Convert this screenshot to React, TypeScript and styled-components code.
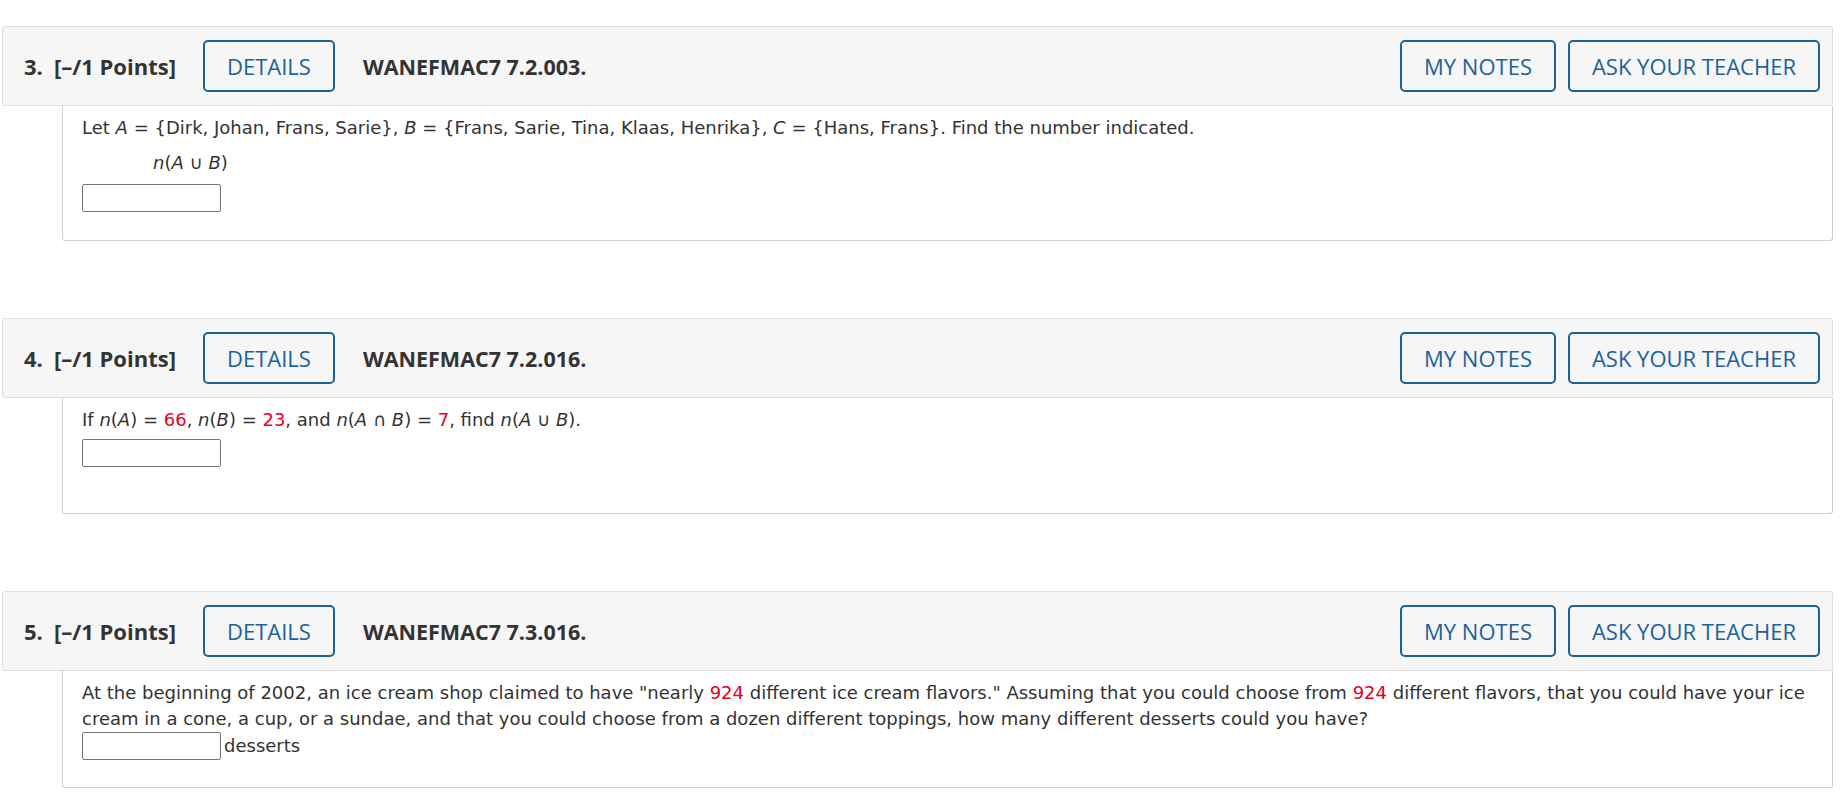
import React, { FunctionComponent, ReactNode } from "react"
import styled, { createGlobalStyle } from "styled-components"

const GlobalStyle = createGlobalStyle`
  html, body {
    margin: 0;
    padding: 0;
    background: #fff;
  }
  body {
    font-family: "DejaVu Sans", Verdana, sans-serif;
    color: #333;
  }
`

type QuestionProps = {
  number: number
  code: string
  bottomSpace: number
  children: ReactNode
}

const Question: FunctionComponent<QuestionProps> = ({
  number,
  code,
  bottomSpace,
  children,
}) => (
  <QuestionBlock>
    <Header>
      <Points>
        <span>{number}.</span>
        <span>[–/1 Points]</span>
      </Points>
      <OutlineButton $minWidth={132}>DETAILS</OutlineButton>
      <Code>{code}</Code>
      <Actions>
        <OutlineButton>MY NOTES</OutlineButton>
        <OutlineButton>ASK YOUR TEACHER</OutlineButton>
      </Actions>
    </Header>
    <Body $bottom={bottomSpace}>{children}</Body>
  </QuestionBlock>
)

const Red: FunctionComponent<{ children: ReactNode }> = ({ children }) => (
  <Given>{children}</Given>
)

export default function App() {
  return (
    <Page>
      <GlobalStyle />
      <Question number={3} code="WANEFMAC7 7.2.003." bottomSpace={28}>
        <Prompt>
          Let <i>A</i> = {"{"}Dirk, Johan, Frans, Sarie{"}"}, <i>B</i> ={" "}
          {"{"}Frans, Sarie, Tina, Klaas, Henrika{"}"}, <i>C</i> = {"{"}Hans,
          Frans{"}"}. Find the number indicated.
        </Prompt>
        <Expression>
          <i>n</i>(<i>A</i> ∪ <i>B</i>)
        </Expression>
        <AnswerRow $top={8}>
          <AnswerInput type="text" />
        </AnswerRow>
      </Question>

      <Question number={4} code="WANEFMAC7 7.2.016." bottomSpace={46}>
        <Prompt>
          If <i>n</i>(<i>A</i>) = <Red>66</Red>, <i>n</i>(<i>B</i>) ={" "}
          <Red>23</Red>, and <i>n</i>(<i>A</i> ∩ <i>B</i>) = <Red>7</Red>,
          find <i>n</i>(<i>A</i> ∪ <i>B</i>).
        </Prompt>
        <AnswerRow $top={6}>
          <AnswerInput type="text" />
        </AnswerRow>
      </Question>

      <Question number={5} code="WANEFMAC7 7.3.016." bottomSpace={27}>
        <Prompt>
          At the beginning of 2002, an ice cream shop claimed to have "nearly{" "}
          <Red>924</Red> different ice cream flavors." Assuming that you could
          choose from <Red>924</Red> different flavors, that you could have your
          ice cream in a cone, a cup, or a sundae, and that you could choose
          from a dozen different toppings, how many different desserts could
          you have?
        </Prompt>
        <AnswerRow $top={0}>
          <AnswerInput type="text" />
          <Unit>desserts</Unit>
        </AnswerRow>
      </Question>
    </Page>
  )
}

const Page = styled.main`
  display: flex;
  flex-direction: column;
  gap: 77px;
  padding: 26px 13px 0 2px;
`

const QuestionBlock = styled.section`
  display: flex;
  flex-direction: column;
`

const Header = styled.header`
  display: flex;
  align-items: center;
  height: 80px;
  box-sizing: border-box;
  padding: 0 12px 0 21px;
  background: #f6f6f6;
  border: 1px solid #dedede;
  border-radius: 3px;
  font-family: "Open Sans", "Liberation Sans", sans-serif;
`

const Points = styled.div`
  display: flex;
  gap: 11px;
  font-size: 22px;
  font-weight: 700;
  color: #333;
  margin-right: 27px;
`

const Code = styled.div`
  margin-left: 28px;
  font-size: 21.5px;
  font-weight: 700;
  color: #333;
`

const Actions = styled.div`
  display: flex;
  gap: 12px;
  margin-left: auto;
`

const OutlineButton = styled.button<{ $minWidth?: number }>`
  min-width: ${(p) => (p.$minWidth ? `${p.$minWidth}px` : "0")};
  height: 52px;
  box-sizing: border-box;
  padding: 0 22px;
  background: transparent;
  border: 2px solid #1c6299;
  border-radius: 5px;
  font-family: "Open Sans", "Liberation Sans", sans-serif;
  font-size: 22px;
  color: #1c6299;
  cursor: pointer;
`

const Body = styled.div<{ $bottom: number }>`
  margin-left: 60px;
  padding: 9px 19px ${(p) => p.$bottom}px;
  border: 1px solid #cfcfcf;
  border-top: none;
  border-radius: 0 0 3px 3px;
  font-size: 18px;
  line-height: 26px;
`

const Prompt = styled.p`
  margin: 0;
`

const Expression = styled.p`
  margin: 9px 0 0;
  padding-left: 71px;
`

const AnswerRow = styled.div<{ $top: number }>`
  display: flex;
  align-items: center;
  gap: 3px;
  margin-top: ${(p) => p.$top}px;
`

const AnswerInput = styled.input`
  width: 139px;
  height: 28px;
  box-sizing: border-box;
  border: 1px solid #767676;
  border-radius: 2px;
  background: #fff;
`

const Unit = styled.span`
  line-height: 20px;
`

const Given = styled.span`
  color: #e8001c;
`
